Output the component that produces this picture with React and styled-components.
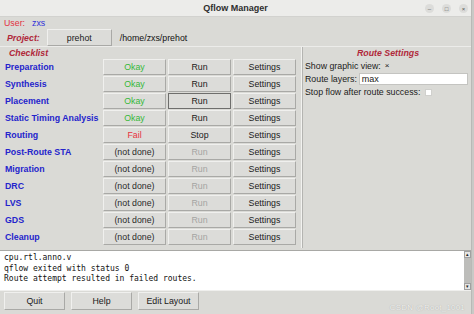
import React from "react";
import styled, { createGlobalStyle } from "styled-components";

const GlobalStyle = createGlobalStyle`
  html, body {
    margin: 0;
    padding: 0;
    background: #c9c9c6;
  }
  body {
    font-family: "Liberation Sans", Arial, sans-serif;
    font-size: 8.8px;
  }
`;

const Window = styled.div`
  position: relative;
  width: 471px;
  height: 314px;
  background: #dadad6;
  display: flex;
  flex-direction: column;
  overflow: hidden;
  border-right: 1px solid #b9b9b6;
`;

const TitleBar = styled.div`
  height: 16px;
  background: #ececea;
  display: flex;
  align-items: center;
  justify-content: center;
  position: relative;
  font-size: 9px;
  font-weight: bold;
  color: #2e2e2e;
  border-bottom: 1px solid #d2d2cf;
`;

const Controls = styled.div`
  position: absolute;
  right: 3px;
  top: 4px;
  display: flex;
  gap: 8px;
`;

const Ctl = styled.div`
  width: 9px;
  height: 9px;
  border-radius: 50%;
  background: #dcdcda;
  color: #555;
  font-size: 6px;
  font-weight: normal;
  display: flex;
  align-items: center;
  justify-content: center;
  line-height: 1;
`;

const UserRow = styled.div`
  height: 12px;
  display: flex;
  align-items: center;
  padding-left: 4px;
  gap: 7px;
`;

const UserLabel = styled.span`
  color: #e2303e;
`;

const UserName = styled.span`
  color: #3030d8;
`;

const ProjectRow = styled.div`
  height: 17px;
  display: flex;
  align-items: center;
  padding-left: 7px;
`;

const Heading = styled.span`
  color: #b0283a;
  font-weight: bold;
  font-style: italic;
`;

const Path = styled.span`
  margin-left: 8px;
  color: #111;
`;

const Button = styled.div`
  box-sizing: border-box;
  height: 16px;
  width: ${(p) => p.$w || 63}px;
  background: #dcdcd9;
  border-top: 1px solid #f0f0ee;
  border-left: 1px solid #f0f0ee;
  border-right: 1px solid #a9a9a6;
  border-bottom: 1px solid #a9a9a6;
  outline: ${(p) => (p.$focus ? "1px solid #6e6e6c" : "none")};
  outline-offset: -1px;
  display: flex;
  align-items: center;
  justify-content: center;
  color: ${(p) => p.$color || "#1a1a1a"};
`;

const ProjectButton = styled(Button)`
  margin-left: 7px;
  height: 17px;
`;

const Main = styled.div`
  display: flex;
  height: 201px;
  border-top: 1px solid #ececea;
`;

const LeftFrame = styled.div`
  width: 301px;
  display: flex;
  flex-direction: column;
`;

const FrameHeader = styled.div`
  height: 12px;
  display: flex;
  align-items: center;
  justify-content: ${(p) => (p.$center ? "center" : "flex-start")};
  padding-left: ${(p) => (p.$center ? 0 : 9)}px;
`;

const Grid = styled.div`
  display: grid;
  grid-template-columns: 98px 63px 63px 63px;
  grid-auto-rows: 16px;
  column-gap: 2px;
  row-gap: 1px;
  padding-left: 3px;
`;

const StepLabel = styled.div`
  color: #2424cc;
  font-weight: bold;
  display: flex;
  align-items: center;
  padding-left: 2px;
  white-space: nowrap;
`;

const RightFrame = styled.div`
  flex: 1;
  border-left: 1px solid #f2f2f0;
  box-shadow: inset 1px 0 0 #b4b4b1;
  display: flex;
  flex-direction: column;
  padding-left: 3px;
`;

const Field = styled.div`
  height: 13px;
  display: flex;
  align-items: center;
  color: #1a1a1a;
  gap: 2px;
`;

const TextInput = styled.div`
  width: 109px;
  height: 12px;
  background: #ffffff;
  border: 1px solid #c4c4c1;
  box-sizing: border-box;
  padding-left: 2px;
  display: flex;
  align-items: center;
  font-size: 9px;
`;

const CheckBox = styled.span`
  width: 5px;
  height: 5px;
  background: #fff;
  border: 1px solid #d0d0cd;
  margin-left: 3px;
  margin-top: 2px;
`;

const Mark = styled.span`
  font-size: 8px;
  margin-left: 2px;
`;

const Console = styled.div`
  margin-top: 2px;
  height: 39px;
  display: flex;
  border-top: 1px solid #a8a8a5;
  border-bottom: 1px solid #efefed;
`;

const Log = styled.pre`
  flex: 1;
  margin: 0;
  background: #ffffff;
  padding: 2px 0 0 4px;
  font-family: "DejaVu Sans Mono", "Liberation Mono", monospace;
  font-size: 8px;
  line-height: 10.7px;
  color: #111;
`;

const Scrollbar = styled.div`
  width: 7px;
  background: #bdbdba;
  display: flex;
  flex-direction: column;
  justify-content: space-between;
`;

const Arrow = styled.div`
  height: 7px;
  background: #e6e6e4;
  border: 1px solid #a0a0a0;
  box-sizing: border-box;
  font-size: 5px;
  line-height: 5px;
  text-align: center;
  color: #222;
`;

const BottomBar = styled.div`
  display: flex;
  gap: 6px;
  padding: 1px 0 0 4px;
`;

const BottomButton = styled(Button)`
  height: 18px;
`;

const Watermark = styled.div`
  position: absolute;
  right: 6px;
  bottom: 2px;
  font-size: 8px;
  color: #f2f2f0;
  text-shadow: 0 0 1px #9a9a98;
  letter-spacing: 0.2px;
`;

const steps = [
  { name: "Preparation", status: "Okay", action: "Run" },
  { name: "Synthesis", status: "Okay", action: "Run" },
  { name: "Placement", status: "Okay", action: "Run", focus: true },
  { name: "Static Timing Analysis", status: "Okay", action: "Run" },
  { name: "Routing", status: "Fail", action: "Stop" },
  { name: "Post-Route STA" },
  { name: "Migration" },
  { name: "DRC" },
  { name: "LVS" },
  { name: "GDS" },
  { name: "Cleanup" },
];

const statusColor = { Okay: "#36b83a", Fail: "#e8323e" };

function StepRow({ step }) {
  const done = !!step.status;
  return (
    <>
      <StepLabel>{step.name}</StepLabel>
      <Button $color={done ? statusColor[step.status] : "#2a2a2a"}>
        {done ? step.status : "(not done)"}
      </Button>
      <Button $focus={step.focus} $color={done ? "#1a1a1a" : "#a4a4a2"}>
        {step.action || "Run"}
      </Button>
      <Button>Settings</Button>
    </>
  );
}

export default function App() {
  return (
    <>
      <GlobalStyle />
      <Window>
        <TitleBar>
          Qflow Manager
          <Controls>
            <Ctl>–</Ctl>
            <Ctl>□</Ctl>
            <Ctl>×</Ctl>
          </Controls>
        </TitleBar>
        <UserRow>
          <UserLabel>User:</UserLabel>
          <UserName>zxs</UserName>
        </UserRow>
        <ProjectRow>
          <Heading>Project:</Heading>
          <ProjectButton $w={65}>prehot</ProjectButton>
          <Path>/home/zxs/prehot</Path>
        </ProjectRow>
        <Main>
          <LeftFrame>
            <FrameHeader>
              <Heading>Checklist</Heading>
            </FrameHeader>
            <Grid>
              {steps.map((s) => (
                <StepRow key={s.name} step={s} />
              ))}
            </Grid>
          </LeftFrame>
          <RightFrame>
            <FrameHeader $center>
              <Heading>Route Settings</Heading>
            </FrameHeader>
            <Field>
              Show graphic view:<Mark>×</Mark>
            </Field>
            <Field>
              Route layers:<TextInput>max</TextInput>
            </Field>
            <Field>
              Stop flow after route success:<CheckBox />
            </Field>
          </RightFrame>
        </Main>
        <Console>
          <Log>
            {"cpu.rtl.anno.v\nqflow exited with status 0\nRoute attempt resulted in failed routes."}
          </Log>
          <Scrollbar>
            <Arrow>▴</Arrow>
            <Arrow>▾</Arrow>
          </Scrollbar>
        </Console>
        <BottomBar>
          <BottomButton $w={61}>Quit</BottomButton>
          <BottomButton $w={61}>Help</BottomButton>
          <BottomButton $w={61}>Edit Layout</BottomButton>
        </BottomBar>
        <Watermark>CSDN @Root_1001</Watermark>
      </Window>
    </>
  );
}
